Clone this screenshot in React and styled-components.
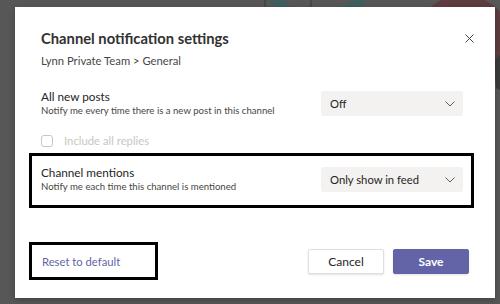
import React from 'react';
import styled, { createGlobalStyle } from 'styled-components';

const GlobalStyle = createGlobalStyle`
  html, body {
    margin: 0;
    padding: 0;
    background: #575757;
    font-family: Lato, "Open Sans", sans-serif;
    color: #252423;
  }
`;

const Page = styled.div`
  position: relative;
  width: 500px;
  height: 304px;
  overflow: hidden;
  box-sizing: border-box;
  padding: 7px 5px 6px 15px;
`;

// blurred app behind the overlay
const Backdrop = styled.svg`
  position: absolute;
  left: 0;
  top: 0;
`;

const Dialog = styled.div`
  position: relative;
  box-sizing: border-box;
  width: 480px;
  height: 291px;
  background: #fff;
  box-shadow: 0 2px 6px rgba(0, 0, 0, 0.25);
  padding: 21px 32px 0 26px;
  display: flex;
  flex-direction: column;
`;

const Header = styled.div`
  display: flex;
  justify-content: space-between;
  align-items: flex-start;
  margin-right: -11px;
`;

const Title = styled.h1`
  margin: 0;
  font-size: 14.75px;
  line-height: 20px;
  font-weight: 700;
  color: #323130;
`;

const CloseButton = styled.button`
  border: 0;
  background: none;
  padding: 0;
  margin-top: 6px;
  width: 9px;
  height: 9px;
  display: flex;
  cursor: pointer;
`;

const Breadcrumb = styled.div`
  margin-top: 5px;
  font-size: 11.25px;
  line-height: 16px;
  color: #484644;
`;

const SettingRow = styled.div`
  display: flex;
  justify-content: space-between;
  align-items: center;
  margin-top: ${p => p.$top || 0}px;
  ${p => p.$highlighted && `
    border: 3px solid #000;
    margin-left: -12px;
    margin-right: -11px;
    padding: 9px 8px 11px 9px;
  `}
`;

const Label = styled.div`
  font-size: 11.75px;
  line-height: 15px;
  color: #252423;
`;

const Hint = styled.div`
  font-size: 9.6px;
  line-height: 14px;
  color: #484644;
`;

const Select = styled.div`
  box-sizing: border-box;
  width: 142px;
  height: 25px;
  border-radius: 3px;
  background: #f3f2f1;
  display: flex;
  align-items: center;
  justify-content: space-between;
  padding: 0 8px 0 9px;
  font-size: 11.25px;
  color: #252423;
`;

const CheckRow = styled.label`
  display: flex;
  align-items: center;
  gap: 11px;
  margin-top: 15px;
  height: 15px;
  font-size: 11.3px;
  color: #c8c6c4;
`;

const Checkbox = styled.span`
  box-sizing: border-box;
  width: 12px;
  height: 12px;
  border: 1px solid #c8c6c4;
  border-radius: 3px;
`;

const Footer = styled.div`
  display: flex;
  justify-content: space-between;
  align-items: center;
  margin-top: 34px;
  margin-right: -6px;
`;

const ResetBox = styled.div`
  box-sizing: border-box;
  width: 129px;
  height: 38px;
  border: 3px solid #000;
  margin-left: -12px;
  display: flex;
  align-items: center;
  padding-left: 10px;
`;

const LinkButton = styled.button`
  border: 0;
  background: none;
  padding: 0;
  font-family: inherit;
  font-size: 11.25px;
  color: #6264a7;
  cursor: pointer;
`;

const Actions = styled.div`
  display: flex;
  gap: 9px;
`;

const Button = styled.button`
  box-sizing: border-box;
  width: 76px;
  height: 25px;
  border-radius: 2px;
  font-family: inherit;
  font-size: 12px;
  font-weight: ${p => (p.$primary ? 700 : 400)};
  color: ${p => (p.$primary ? '#fff' : '#252423')};
  background: ${p => (p.$primary ? '#6264a7' : '#fff')};
  border: 1px solid ${p => (p.$primary ? '#6264a7' : '#e1dfdd')};
  box-shadow: 0 1px 2px rgba(0, 0, 0, 0.12);
  cursor: pointer;
`;

const Chevron = () => (
  <svg width="10" height="6" viewBox="0 0 10 6" fill="none">
    <path d="M0.5 0.5 L5 5 L9.5 0.5" stroke="#605e5c" strokeWidth="1" />
  </svg>
);

function Dropdown({ value }) {
  return (
    <Select>
      <span>{value}</span>
      <Chevron />
    </Select>
  );
}

function App() {
  return (
    <Page>
      <GlobalStyle />
      <Backdrop width="500" height="304" viewBox="0 0 500 304">
        <circle cx="318" cy="-45" r="62" fill="none" stroke="#3f5e5d" strokeWidth="10" />
        <line x1="265" y1="0" x2="265" y2="8" stroke="#3a3a3a" />
        <line x1="290" y1="0" x2="290" y2="8" stroke="#7a4848" />
        <line x1="311" y1="0" x2="311" y2="8" stroke="#3a3a3a" />
        <circle cx="463" cy="45" r="50" fill="#5e3c3f" />
        <path d="M495 60 L500 55 L500 90 L496 88 Z" fill="#3a3a3a" />
      </Backdrop>
      <Dialog>
        <Header>
          <Title>Channel notification settings</Title>
          <CloseButton aria-label="Close">
            <svg width="9" height="9" viewBox="0 0 9 9">
              <path d="M0.5 0.5 L8.5 8.5 M8.5 0.5 L0.5 8.5" stroke="#484644" strokeWidth="1" />
            </svg>
          </CloseButton>
        </Header>
        <Breadcrumb>Lynn Private Team &gt; General</Breadcrumb>

        <SettingRow $top={20}>
          <div>
            <Label>All new posts</Label>
            <Hint>Notify me every time there is a new post in this channel</Hint>
          </div>
          <Dropdown value="Off" />
        </SettingRow>

        <CheckRow>
          <Checkbox />
          Include all replies
        </CheckRow>

        <SettingRow $top={5} $highlighted>
          <div>
            <Label>Channel mentions</Label>
            <Hint>Notify me each time this channel is mentioned</Hint>
          </div>
          <Dropdown value="Only show in feed" />
        </SettingRow>

        <Footer>
          <ResetBox>
            <LinkButton>Reset to default</LinkButton>
          </ResetBox>
          <Actions>
            <Button>Cancel</Button>
            <Button $primary>Save</Button>
          </Actions>
        </Footer>
      </Dialog>
    </Page>
  );
}

export default App;
